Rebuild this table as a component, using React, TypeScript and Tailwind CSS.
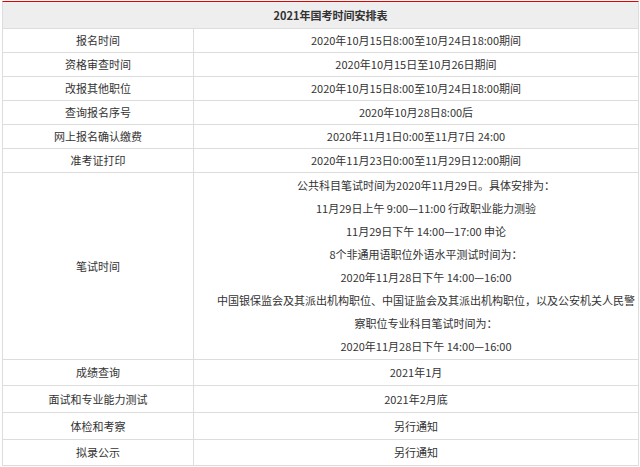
const rows: { label: string; value: string; h: string }[] = [
  { label: "报名时间", value: "2020年10月15日8:00至10月24日18:00期间", h: "h-[24px]" },
  { label: "资格审查时间", value: "2020年10月15日至10月26日期间", h: "h-[24px]" },
  { label: "改报其他职位", value: "2020年10月15日8:00至10月24日18:00期间", h: "h-[24px]" },
  { label: "查询报名序号", value: "2020年10月28日8:00后", h: "h-[24px]" },
  { label: "网上报名确认缴费", value: "2020年11月1日0:00至11月7日 24:00", h: "h-[24px]" },
  { label: "准考证打印", value: "2020年11月23日0:00至11月29日12:00期间", h: "h-[24px]" },
]

const tail: { label: string; value: string; h: string }[] = [
  { label: "成绩查询", value: "2021年1月", h: "h-[26px]" },
  { label: "面试和专业能力测试", value: "2021年2月底", h: "h-[27px]" },
  { label: "体检和考察", value: "另行通知", h: "h-[27px]" },
  { label: "拟录公示", value: "另行通知", h: "h-[26px]" },
]

const examLines = [
  "公共科目笔试时间为2020年11月29日。具体安排为：",
  "11月29日上午 9:00—11:00 行政职业能力测验",
  "11月29日下午 14:00—17:00 申论",
  "8个非通用语职位外语水平测试时间为：",
  "2020年11月28日下午 14:00—16:00",
  "中国银保监会及其派出机构职位、中国证监会及其派出机构职位，以及公安机关人民警",
  "察职位专业科目笔试时间为：",
  "2020年11月28日下午 14:00—16:00",
]

function Row({ label, value, h }: { label: string; value: string; h: string }) {
  return (
    <div className={`flex border-b border-[#dddddd] ${h}`}>
      <div className="w-[191px] shrink-0 border-r border-[#dddddd] flex items-center justify-center">
        {label}
      </div>
      <div className="flex-1 flex items-center justify-center whitespace-nowrap">{value}</div>
    </div>
  )
}

export default function App() {
  return (
    <div className="w-[640px] h-[467px] overflow-hidden bg-white pt-px font-['Noto_Sans_CJK_SC','Microsoft_YaHei',sans-serif] text-[11px] text-[#333333]">
      <div className="ml-[2px] mr-px border-x border-[#dddddd] border-t border-t-[#e60000]">
        {/* title */}
        <div className="h-[27px] flex items-center justify-center pl-[20px] bg-[#eeeeee] border-b border-[#dddddd] font-bold">
          2021年国考时间安排表
        </div>

        {rows.map((r) => (
          <Row key={r.label} {...r} />
        ))}

        {/* written exam */}
        <div className="flex border-b border-[#dddddd] h-[187px]">
          <div className="w-[191px] shrink-0 border-r border-[#dddddd] flex items-center justify-center">
            笔试时间
          </div>
          <div className="flex-1 flex flex-col items-center justify-center pl-[20px] leading-[23px] whitespace-nowrap">
            {examLines.map((l, i) => (
              <div key={i}>{l}</div>
            ))}
          </div>
        </div>

        {tail.map((r) => (
          <Row key={r.label} {...r} />
        ))}
      </div>
    </div>
  )
}
